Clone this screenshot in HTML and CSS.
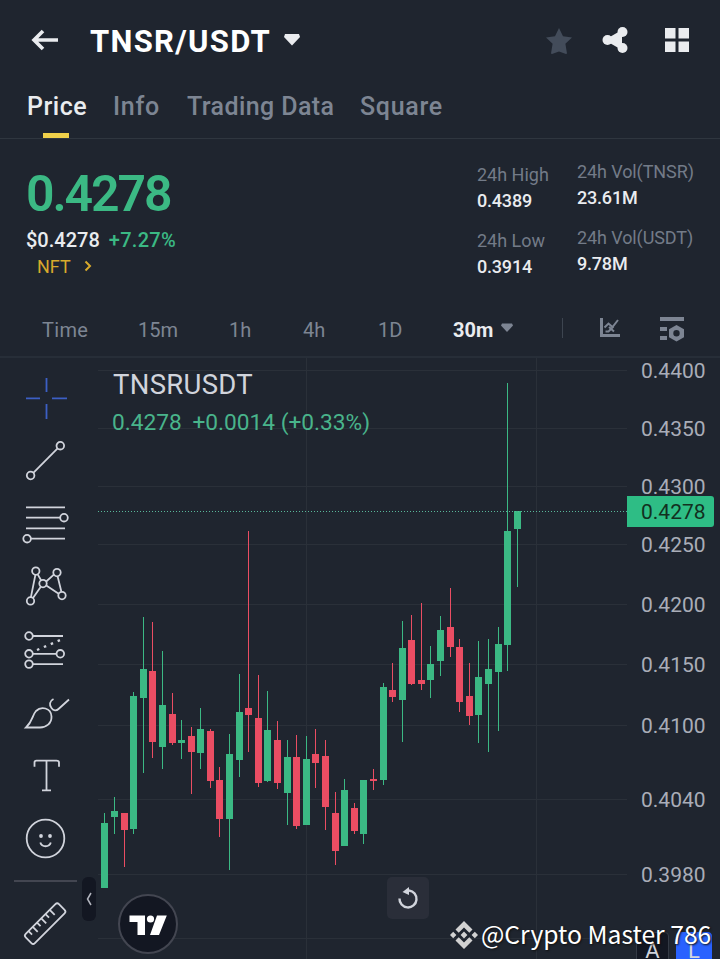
FILE: index.html
```html
<!DOCTYPE html>
<html lang="en">
<head>
	<meta charset="UTF-8">
	<title>TNSR/USDT</title>
	<link rel="stylesheet" href="styles.css">
	<script src="chart.js" defer></script>
</head>
<body>
	<div class="top">
		<svg class="back" width="28" height="22" viewBox="0 0 28 22"><path d="M27 11H3M12 2L3 11l9 9"/></svg>
		<h1>TNSR/USDT</h1>
		<svg class="caret" width="18" height="14" viewBox="0 0 18 14"><path d="M2 1h14l1 3-8 8.5L1 4z"/></svg>
		<svg class="star" width="28" height="28" viewBox="0 0 28 28"><path d="M14 1l4 8.3 9 1.3-6.6 6.2L22 26.500l-1 .5-7-2.500L7 27l-1-.5 1.600-9.700L1 10.600l9-1.300z"/></svg>
		<svg class="share" width="28" height="28" viewBox="0 0 28 28"><path d="M21 6L7 14l14 8"/><circle cx="21.500" cy="6" r="5"/><circle cx="6.500" cy="14" r="5"/><circle cx="21.500" cy="22" r="5"/></svg>
		<svg class="apps" width="26" height="26" viewBox="0 0 26 26"><path d="M1 1h10.500v10.500H1zM14.500 1H25v10.500H14.500zM1 14.500h10.500V25H1zM14.500 14.500H25V25H14.500z"/></svg>
	</div>

	<div class="tabs">
		<a class="current">Price</a>
		<a class="info">Info</a>
		<a class="trading">Trading Data</a>
		<a class="square">Square</a>
	</div>

	<div class="summary">
		<div class="price">
			<div class="last">0.4278</div>
			<div class="fiat"><span>$0.4278</span><span class="up">+7.27%</span></div>
			<div class="nft">NFT <svg width="8" height="12" viewBox="0 0 8 12"><path d="M1.500 1.500L6 6l-4.500 4.500"/></svg></div>
		</div>
		<dl class="range">
			<dt>24h High</dt>
			<dd>0.4389</dd>
			<dt>24h Low</dt>
			<dd>0.3914</dd>
		</dl>
		<dl class="volume">
			<dt>24h Vol(TNSR)</dt>
			<dd>23.61M</dd>
			<dt>24h Vol(USDT)</dt>
			<dd>9.78M</dd>
		</dl>
	</div>

	<div class="intervals">
		<span class="i-time">Time</span>
		<span class="i-15m">15m</span>
		<span class="i-1h">1h</span>
		<span class="i-4h">4h</span>
		<span class="i-1d">1D</span>
		<span class="active">30m</span>
		<svg class="drop" width="12" height="10" viewBox="0 0 12 10"><path d="M1 .5h10l1 2-6 6.500-6-6.500z"/></svg>
		<i class="sep"></i>
		<svg class="indicator" width="20" height="20" viewBox="0 0 20 20"><path class="axis" d="M1.500 0v17.500H20"/><path d="M4.500 9.500l4-4 4 3.500L18 2M5.500 13.500h3l5-5M9 9l5 4.500"/></svg>
		<svg class="settings" width="26" height="26" viewBox="0 0 26 26"><path d="M1 1h24v4H1zM1 11h7v4H1zM1 20h7v4H1z"/><path fill-rule="evenodd" d="M17.500 9l7.500 4.200v8L17.500 25.500 10 21.200v-8zM17.500 14a3.200 3.200 0 1 0 0 6.400 3.200 3.200 0 0 0 0-6.400z"/></svg>
	</div>

	<div class="main">
		<div class="tools">
			<svg class="cross" viewBox="0 0 44 44"><path d="M22.500 2v14M22.500 28v15M2 22.300h14M28 22.300h15"/></svg>
			<svg viewBox="0 0 44 44"><path d="M9.300 33.800L33.600 9.400"/><circle cx="36.300" cy="6.700" r="3.800"/><circle cx="6.600" cy="36.500" r="3.800"/></svg>
			<svg viewBox="0 0 44 44"><path d="M2 5.400h39M2 15.700h34M2 26.400h39M7 36.700h34"/><circle cx="40" cy="15.700" r="3.800"/><circle cx="3.100" cy="36.700" r="3.800"/></svg>
			<svg viewBox="0 0 44 44"><path d="M11.400 10.900L6.900 33.100M13.700 10.400l3.400 5.900M9 34l7.800-11.300M22.200 17.500l7.600-6.800M33.600 12.400l3.800 15.400M22.300 21.500l12.400 8.200"/><circle cx="11.800" cy="7.100" r="3.700"/><circle cx="33" cy="8.600" r="3.700"/><circle cx="19" cy="19.600" r="3.700"/><circle cx="38" cy="31.600" r="3.700"/><circle cx="6.500" cy="36.900" r="3.700"/></svg>
			<svg viewBox="0 0 44 44"><path d="M9 9h30M9 26.800h23.500M9 37.100h30"/><path class="dots" d="M13 23l24-10.400"/><circle cx="5" cy="9" r="3.800"/><circle cx="5" cy="26.800" r="3.800"/><circle cx="36.300" cy="26.800" r="3.800"/><circle cx="5" cy="37.100" r="3.800"/></svg>
			<svg viewBox="0 0 44 44"><path d="M2 37.500c7-6.500 6-12 10-16.500 5-5 15-3.500 15.500 5.500.300 7-5.500 11-11.500 11zM29.500 9c-4 2-4.500 6-2 9 2 3 5 3 7 1L45 9.500"/></svg>
			<svg viewBox="0 0 44 44"><path d="M10.500 13.700V9.500q0-1.800 2-1.800h20q2.500 0 2.500 1.800v4.200M22.500 7.700v29.600M18 37.300h9"/></svg>
			<svg viewBox="0 0 44 44"><circle cx="21.500" cy="22.500" r="18.800"/><path d="M16.300 26.500c1.500 5 9 5 10.500 0"/><circle class="eye" cx="17" cy="20" r="1.900"/><circle class="eye" cx="26" cy="20" r="1.900"/></svg>
			<hr>
			<svg viewBox="0 0 44 44"><g transform="rotate(-45 21.500 22)"><rect x="-2" y="15" width="47" height="13" rx="2.500"/><path d="M4.500 15v5M10.500 15v7M16.500 15v5M22.500 15v7M28.500 15v5M34.500 15v7"/></g></svg>
			<div class="collapse"><svg viewBox="0 0 6 14"><path d="M5 1L1.500 7 5 13"/></svg></div>
		</div>

		<svg class="chart" width="623" height="603" viewBox="97 356 623 603">
			<g id="grid"></g>
			<g id="candles"></g>
			<path class="last-line" d="M98 511.500H627"/>
			<text class="symbol" x="113" y="393.500">TNSRUSDT</text>
			<text class="change" x="112" y="430">0.4278</text>
			<text class="change" x="192.500" y="430">+0.0014 (+0.33%)</text>
			<g id="axis"></g>
			<path class="tag" d="M627 496h84q3 0 3 3v25q0 3-3 3h-84z"/>
			<text class="tag-text" x="641" y="519">0.4278</text>
			<g class="tv">
				<circle cx="148" cy="924" r="29"/>
				<path d="M129.500 915.500H145V935h-7.500v-13h-8zM157 915.500h9.800L159 935h-9z"/>
				<circle class="dot" cx="150.500" cy="919" r="3.600"/>
			</g>
			<g class="reset">
				<rect x="387" y="877" width="42" height="42" rx="5"/>
				<path d="M399.500 898.500a8.500 8.500 0 1 0 9.500-8"/>
				<path class="head" d="M402.500 892l6.500-5v8z"/>
			</g>
		</svg>

		<div class="scale"><span>A</span><span class="log">L</span></div>
		<div class="watermark">
			<svg width="28" height="28" viewBox="0 0 28 28"><path d="M14 0l8.500 8.500-3.200 3.200L14 6.400l-5.300 5.300-3.200-3.200zM3.200 10.800L6.400 14l-3.200 3.200L0 14zM24.800 10.800L28 14l-3.200 3.200-3.200-3.200zM14 10.600l3.400 3.400-3.400 3.400-3.400-3.400zM5.500 19.500l3.200-3.200 5.300 5.300 5.300-5.300 3.200 3.200L14 28z"/></svg>
			<span>@Crypto Master 786</span>
		</div>
	</div>
</body>
</html>
```
FILE: styles.css
```css
* {
	margin: 0;
	padding: 0;
	box-sizing: border-box;
}
body {
	width: 720px;
	height: 959px;
	overflow: hidden;
	background-color: #1f252f;
	color: #eaecef;
	font-family: Roboto, "Liberation Sans", sans-serif;
}
svg {
	display: block;
	flex: none;
	fill: none;
}

/* title bar */
.top {
	display: flex;
	align-items: center;
	height: 80px;
	padding-left: 31px;
}
.back {
	stroke: #eaecef;
	stroke-width: 3.6;
}
h1 {
	width: 180px;
	margin-left: 31px;
	padding-top: 3px;
	font-size: 31px;
	font-weight: 700;
	letter-spacing: 1.3px;
	white-space: nowrap;
	color: #fff;
}
.caret, .star, .share, .apps {
	fill: #eaecef;
}
.caret {
	margin-left: 13px;
}
.star {
	margin-left: 244px;
	margin-top: 2px;
	fill: #434c5a;
}
.share {
	margin-left: 28px;
}
.share path {
	stroke: #eaecef;
	stroke-width: 3.5;
}
.apps {
	margin-left: 35px;
}

/* tabs */
.tabs {
	display: flex;
	height: 59px;
	padding: 12px 0 0 27px;
	border-bottom: 1px solid #2f363f;
	font-size: 25px;
	font-weight: 500;
	line-height: 30px;
	letter-spacing: .7px;
	white-space: nowrap;
	color: #7d8593;
}
.tabs a {
	height: 46px;
}
.tabs .current {
	width: 59px;
	letter-spacing: .5px;
	color: #eaecef;
}
.current::after {
	content: "";
	display: block;
	width: 26px;
	height: 5px;
	margin: 11px 0 0 16px;
	background-color: #f0d04a;
}
.info {
	width: 47px;
	margin-left: 27px;
}
.trading {
	width: 146px;
	margin-left: 27px;
	letter-spacing: .4px;
}
.square {
	margin-left: 27px;
}

/* price summary */
.summary {
	display: flex;
	height: 161px;
	padding-left: 26px;
	white-space: nowrap;
}
.price {
	width: 451px;
	padding-top: 28px;
}
.last {
	height: 54px;
	font-size: 50px;
	font-weight: 600;
	line-height: 54px;
	letter-spacing: -2.1px;
	color: #3bb984;
}
.fiat {
	display: flex;
	gap: 9px;
	height: 28px;
	margin-top: 5px;
	font-size: 20px;
	font-weight: 500;
	line-height: 28px;
}
.up {
	letter-spacing: .3px;
	color: #3bb984;
}
.nft {
	display: flex;
	align-items: center;
	gap: 13px;
	height: 26px;
	margin-top: -1px;
	padding-left: 11px;
	font-size: 18px;
	color: #d8aa2c;
}
.nft svg {
	stroke: #d8aa2c;
	stroke-width: 2;
}
.range {
	width: 100px;
	padding-top: 23px;
}
.volume {
	padding-top: 20px;
}
dt {
	height: 26px;
	font-size: 18px;
	line-height: 26px;
	color: #737b88;
}
.volume dt {
	letter-spacing: -.1px;
}
dd {
	height: 40px;
	font-size: 18px;
	font-weight: 500;
	line-height: 26px;
	letter-spacing: -.2px;
}

/* interval bar */
.intervals {
	display: flex;
	align-items: center;
	height: 56px;
	padding: 3px 0 0 42px;
	font-size: 20px;
	white-space: nowrap;
	color: #7d8593;
}
.i-time {
	width: 96px;
	letter-spacing: .3px;
}
.i-15m {
	width: 91px;
}
.i-1h {
	width: 74px;
}
.i-4h {
	width: 75px;
}
.i-1d {
	width: 75px;
}
.active {
	width: 48px;
	font-weight: 700;
	color: #eaecef;
}
.drop, .settings {
	fill: #7d8593;
}
.drop {
	margin-top: -4px;
}
.sep {
	width: 1px;
	height: 20px;
	margin: -3px 37px 0 49px;
	background-color: #3d4550;
}
.indicator {
	margin-top: -3px;
	stroke: #7d8593;
	stroke-width: 2;
}
.axis {
	stroke-width: 3;
}
.settings {
	margin-left: 39px;
	margin-top: -2px;
}

/* chart and drawing tools */
.main {
	display: flex;
	position: relative;
	height: 603px;
}
.tools {
	display: flex;
	flex-direction: column;
	gap: 18.8px;
	position: relative;
	width: 97px;
	padding: 20px 0 0 24px;
	border-top: 2px solid #272e38;
}
.tools > svg {
	width: 44px;
	height: 44px;
	overflow: visible;
	margin-top: -2px;
	margin-bottom: 2px;
	stroke: #d1d4dc;
	stroke-width: 1.8;
}
.tools .cross {
	stroke: #3c5fc4;
}
.dots {
	stroke-width: 2.4;
	stroke-dasharray: 2.5 5;
}
.eye {
	fill: #d1d4dc;
	stroke: none;
}
.tools hr {
	flex: none;
	width: 63px;
	height: 2px;
	margin: -.5px 0 -18.8px -10px;
	border: 0;
	background-color: #434651;
}
.tools > hr + svg {
	margin-top: 20px;
}
.collapse {
	position: absolute;
	left: 82px;
	top: 519px;
	width: 14px;
	height: 44px;
	padding: 15px 0 0 4px;
	border-radius: 6px;
	background-color: #131722;
}
.collapse svg {
	width: 6px;
	height: 14px;
	stroke: #b2b5be;
	stroke-width: 1.5;
}
.grid-line {
	stroke: #2a3039;
}
.edge {
	stroke: #272e38;
	stroke-width: 2;
}
.rise {
	fill: #3bb984;
}
.fall {
	fill: #ea4d63;
}
.last-line {
	stroke: #59b79a;
	stroke-dasharray: 1 2;
}
.symbol {
	font-size: 27.5px;
	letter-spacing: .3px;
	fill: #d1d4dc;
}
.change {
	font-size: 22.7px;
	fill: #49b48b;
}
.price-label, .tag-text {
	font-size: 21px;
	fill: #a9adb8;
}
.tag {
	fill: #2ebd85;
}
.tag-text {
	fill: #12301f;
}
.tv {
	fill: #131722;
	stroke: #434651;
	stroke-width: 2;
}
.tv path, .dot {
	fill: #fff;
	stroke: none;
}
.reset {
	stroke: #d1d4dc;
	stroke-width: 2.4;
}
.reset rect {
	fill: #2a2e39;
	stroke: none;
}
.reset .head {
	fill: #d1d4dc;
	stroke: none;
}
.scale {
	display: flex;
	gap: 7px;
	position: absolute;
	left: 636px;
	top: 576px;
	font-size: 22px;
	line-height: 36px;
	text-align: center;
}
.scale span {
	width: 33px;
	height: 40px;
	border: 1px solid #343a45;
	border-radius: 4px;
	background-color: #131722;
	color: #d1d4dc;
}
.scale .log {
	width: 36px;
	border-color: #2962ff;
	background-color: #2962ff;
}
.watermark {
	display: flex;
	align-items: center;
	gap: 3px;
	position: absolute;
	left: 450px;
	top: 561px;
	height: 36px;
	font-family: "Noto Sans CJK SC", sans-serif;
	font-size: 24.7px;
	line-height: 36px;
	white-space: nowrap;
	color: #fff;
	text-shadow: 1px 1px 2px #111;
}
.watermark span {
	margin-top: -4px;
}
.watermark svg {
	fill: #d2d2d2;
}
```
FILE: chart.js
```js
var ns = "http://www.w3.org/2000/svg";

// x, high, body top, body bottom, low, up
var candles = [
	[101, 813, 823, 888, 888, 1], [111, 797, 811, 817, 834, 1], [121, 813, 813, 830, 867, 0],
	[130, 692, 696, 829, 834, 1], [140, 617, 669, 698, 773, 1], [149, 622, 671, 742, 758, 0],
	[159, 651, 705, 747, 769, 1], [169, 693, 714, 743, 745, 0], [178, 720, 740, 743, 759, 1],
	[188, 727, 736, 752, 794, 0], [197, 708, 729, 753, 769, 1], [207, 729, 731, 781, 788, 0],
	[216, 767, 780, 819, 837, 0], [226, 734, 754, 819, 870, 1], [236, 674, 712, 760, 777, 1],
	[245, 531, 708, 715, 752, 0], [255, 675, 718, 783, 787, 0], [264, 691, 730, 781, 782, 1],
	[274, 721, 740, 783, 789, 0], [284, 740, 757, 793, 825, 1], [293, 735, 757, 826, 829, 0],
	[303, 736, 759, 825, 825, 1], [312, 729, 754, 763, 788, 0], [322, 740, 756, 807, 830, 0],
	[332, 792, 813, 851, 865, 0], [341, 779, 790, 846, 846, 1], [351, 803, 808, 831, 834, 0],
	[360, 780, 780, 834, 844, 1], [370, 769, 779, 781, 790, 0], [380, 683, 687, 780, 785, 1],
	[389, 663, 690, 697, 702, 0], [399, 621, 648, 700, 742, 1], [408, 615, 640, 684, 685, 0],
	[418, 603, 680, 684, 690, 0], [427, 646, 664, 680, 698, 1], [437, 616, 630, 661, 676, 1],
	[447, 588, 627, 647, 657, 0], [456, 639, 647, 702, 712, 0], [466, 663, 696, 716, 725, 0],
	[475, 641, 677, 715, 743, 1], [485, 639, 669, 684, 752, 1], [495, 627, 644, 672, 731, 1],
	[504, 383, 531, 645, 671, 1], [514, 511, 511, 529, 587, 1]
];

var prices = [
	[370, "0.4400"], [428, "0.4350"], [486, "0.4300"], [544, "0.4250"], [604, "0.4200"],
	[664, "0.4150"], [725, "0.4100"], [799, "0.4040"], [874, "0.3980"], [938, ""]
];

function add(id, tag, attrs) {
	var el = document.createElementNS(ns, tag);
	for (var key in attrs) {
		el.setAttribute(key, attrs[key]);
	}
	document.getElementById(id).appendChild(el);
	return el;
}

for (var i = 0; i < prices.length; i++) {
	var y = prices[i][0];
	add("grid", "path", {"class": "grid-line", d: "M98 " + (y + .5) + "H627"});
	if (prices[i][1]) {
		add("axis", "text", {"class": "price-label", x: 641, y: y + 8}).textContent = prices[i][1];
	}
}
add("grid", "path", {"class": "grid-line", d: "M306.5 357V959M536.5 357V959"});
add("grid", "path", {"class": "edge", d: "M97 357H720"});

for (var i = 0; i < candles.length; i++) {
	var c = candles[i];
	var name = c[5] ? "rise" : "fall";
	add("candles", "rect", {"class": name, x: c[0] + 3, y: c[1], width: 1, height: c[4] - c[1]});
	add("candles", "rect", {"class": name, x: c[0], y: c[2], width: 7, height: c[3] - c[2]});
}
```
